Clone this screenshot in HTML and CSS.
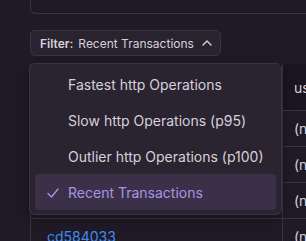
FILE: index.html
```html
<!DOCTYPE html>
<html>

<head>
    <meta charset="utf-8">
    <title>Transactions</title>

    <link rel="stylesheet" href="styles.css">
</head>

<body>

    <div class="page-wrapper">
        <div class="top-panel"></div>

        <div class="filter">
            <button class="filter-button">
                <b>Filter:</b> Recent Transactions
                <svg class="chevron" width="12" height="12" viewBox="0 0 12 12">
                    <path d="M2 8 L6 4 L10 8" fill="none" stroke="currentColor" stroke-width="1.4" stroke-linecap="round" stroke-linejoin="round"/>
                </svg>
            </button>

            <ul class="menu">
                <li>Fastest http Operations</li>
                <li>Slow http Operations (p95)</li>
                <li>Outlier http Operations (p100)</li>
                <li class="selected">
                    <svg class="check" width="14" height="14" viewBox="0 0 14 14">
                        <path d="M2 7.5 L5.5 11 L12 3" fill="none" stroke="currentColor" stroke-width="1.3" stroke-linecap="round" stroke-linejoin="round"/>
                    </svg>
                    Recent Transactions
                </li>
            </ul>
        </div>

        <div class="table">
            <div class="row head">
                <div class="cell id"></div>
                <div class="cell user">us</div>
            </div>
            <div class="row">
                <div class="cell id"></div>
                <div class="cell user">(n</div>
            </div>
            <div class="row">
                <div class="cell id"></div>
                <div class="cell user">(n</div>
            </div>
            <div class="row">
                <div class="cell id"></div>
                <div class="cell user">(n</div>
            </div>
            <div class="row">
                <div class="cell id"><a href="#">cd584033</a></div>
                <div class="cell user">(n</div>
            </div>
        </div>
    </div>

</body>

</html>
```

FILE: styles.css
```css
* {
    box-sizing: border-box;
}

html,
body {
    margin: 0;
    height: 100%;
    overflow: hidden;
    background: #1f1a25;
    font-family: Inter, "Noto Sans", sans-serif;
    color: #d6d0dc;
}

.page-wrapper {
    padding-left: 30px;
}

/* Panel above, only its bottom is visible */

.top-panel {
    height: 14px;
    width: 400px;
    border: 1px solid #3b3344;
    border-top: none;
    border-bottom-left-radius: 6px;
}

/* Filter dropdown */

.filter {
    position: relative;
    margin-top: 16px;
}

.filter-button {
    display: flex;
    align-items: center;
    gap: 4px;
    height: 26px;
    padding: 0 7px 0 9px;
    border: 1px solid #3b3344;
    border-radius: 5px;
    background: #29222f;
    color: #d6d0dc;
    font-family: inherit;
    font-size: 12px;
}

.filter-button b {
    font-weight: 600;
    margin-right: 1px;
}

.chevron {
    margin-left: 3px;
}

.menu {
    position: absolute;
    left: -1px;
    top: 33px;
    z-index: 10;
    width: 253px;
    margin: 0;
    padding: 2px 5px 4px;
    list-style: none;
    border: 1px solid #3b3344;
    border-radius: 6px;
    background: #2a2330;
    box-shadow: 0 4px 12px rgba(0, 0, 0, 0.3);
}

.menu li {
    display: flex;
    align-items: center;
    height: 36px;
    padding-left: 33px;
    font-size: 14px;
    position: relative;
}

.menu li.selected {
    background: #3a3048;
    border-radius: 4px;
    color: #a596e6;
}

.check {
    position: absolute;
    left: 11px;
    top: 12px;
}

/* Table */

.table {
    margin-top: 8px;
    width: 400px;
    border-left: 1px solid #3b3344;
}

.row {
    display: flex;
    height: 36px;
    border-bottom: 1px solid #3b3344;
    font-size: 14px;
}

.row.head {
    height: 47px;
    background: #1a1520;
}

.cell {
    display: flex;
    align-items: center;
}

.cell.id {
    width: 251px;
    padding-left: 16px;
}

.cell.user {
    padding-left: 11px;
    border-left: 1px solid #3b3344;
}

.cell a {
    color: #3d8cf2;
    text-decoration: none;
}
```
